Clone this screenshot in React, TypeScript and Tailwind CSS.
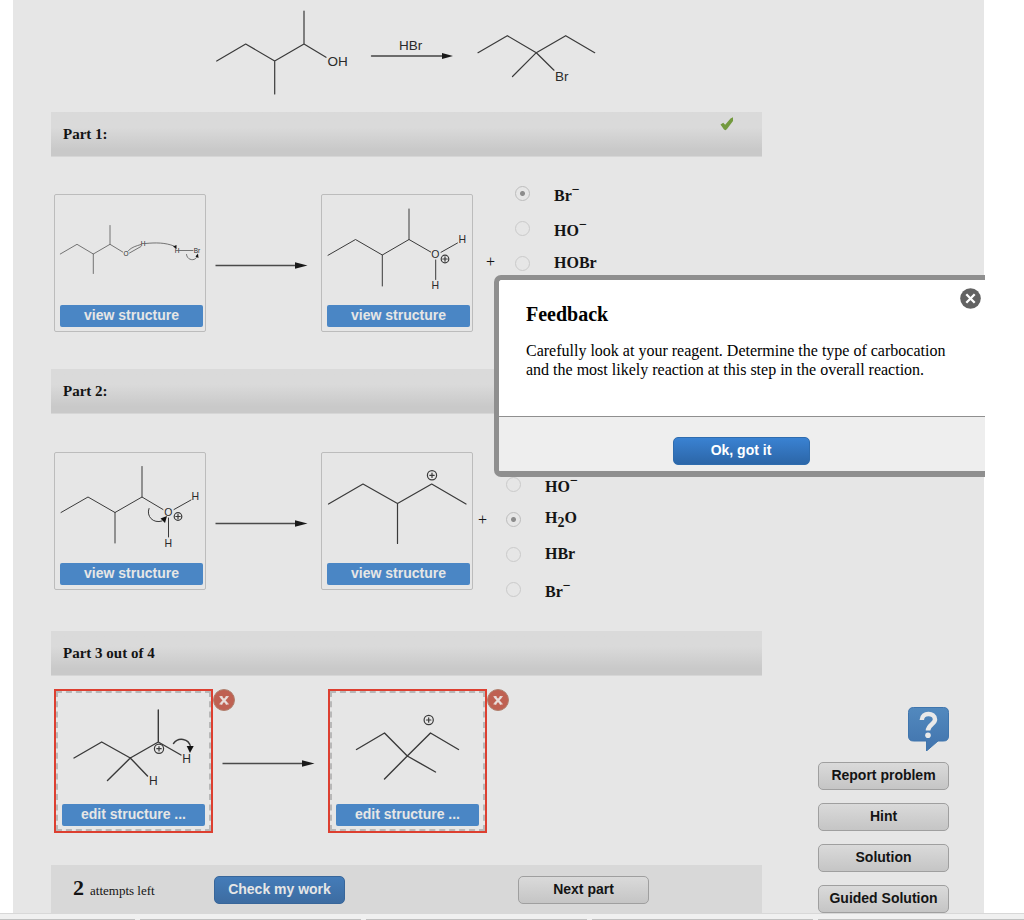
import type { ReactNode } from 'react';

const grayButton =
  'flex h-7 w-full items-center justify-center rounded-[5px] border border-[#9f9f9f] bg-linear-to-b from-[#dadada] to-[#c5c5c5] pb-[2px] font-["Liberation_Sans",Arial,sans-serif] text-sm font-bold text-[#141414]';

function Arrow() {
  return (
    <svg width="115" height="20" viewBox="0 0 115 20" className="shrink-0" aria-hidden="true">
      <path d="M9.5 12.5H92" stroke="#4a4a4a" strokeWidth="1.5" />
      <path d="M89 9.2L101.5 12.5L89 15.8Z" fill="#1a1a1a" />
    </svg>
  );
}

function Drawing({ viewBox, height, children, wide = false }: { viewBox: string; height: number; children: ReactNode; wide?: boolean }) {
  return (
    <svg
      viewBox={viewBox}
      width={wide ? 711 : 150}
      height={height}
      fill="none"
      stroke="#3a3a3a"
      strokeLinejoin="round"
      strokeLinecap="round"
      className='block font-["Liberation_Sans",Arial,sans-serif]'
      aria-hidden="true"
    >
      {children}
    </svg>
  );
}

function Atom({ x, y, size = 11, middle = true, children }: { x: number; y: number; size?: number; middle?: boolean; children: string }) {
  return (
    <text x={x} y={y} fontSize={size} fill="#2a2a2a" stroke="none" textAnchor={middle ? 'middle' : 'start'}>
      {children}
    </text>
  );
}

function Charge({ x, y, r = 4 }: { x: number; y: number; r?: number }) {
  return (
    <g strokeWidth="1.2">
      <circle cx={x} cy={y} r={r} />
      <path d={`M${x - 2.2} ${y}h4.4M${x} ${y - 2.2}v4.4`} />
    </g>
  );
}

function ViewCard({ children }: { children: ReactNode }) {
  return (
    <div className="w-[152px] shrink-0 rounded-[2px] border border-[#bcbcbc] pb-1">
      {children}
      <button className='ml-[5px] flex h-[22px] w-[143px] items-center justify-center rounded-[2px] bg-[#4a86c5] pb-[2px] font-["Liberation_Sans",Arial,sans-serif] text-sm font-bold text-[#e6e6e6]'>
        view structure
      </button>
    </div>
  );
}

function EditCard({ children }: { children: ReactNode }) {
  return (
    <div className="relative w-[159px] shrink-0 border-2 border-[#dd3f30]">
      <div className="border-2 border-dashed border-[#b8b8b8] pb-[3px]">
        {children}
        <button className='ml-1 flex h-[22px] w-[143px] items-center justify-center rounded-[2px] bg-[#4a86c5] pb-[2px] font-["Liberation_Sans",Arial,sans-serif] text-sm font-bold text-[#e6e6e6]'>
          edit structure ...
        </button>
      </div>
      <svg width="22" height="22" viewBox="0 0 22 22" className="absolute -top-0.5 left-full ml-0.5" role="img" aria-label="Incorrect">
        <circle cx="11" cy="11" r="10.5" fill="#bf6152" stroke="#b0816f" />
        <path d="M7.7 7.8L14.3 15M14.3 7.8L7.7 15" stroke="#e8dedb" strokeWidth="2.3" />
        <path d="M6.5 7.6h3M12.7 7.6h3M6.5 15h3M12.7 15h3" stroke="#e8dedb" strokeWidth="1" />
      </svg>
    </div>
  );
}

function PartBar({ title, done = false }: { title: string; done?: boolean }) {
  return (
    <div className="flex h-[45px] items-start justify-between border-b border-[#d6d6d6] bg-linear-to-b from-[#dadada] from-35% to-[#c9c9c9] to-85% pl-3">
      <h2 className="pt-[13px] text-[15px] leading-[18px] font-bold text-[#141414]">{title}</h2>
      {done && (
        <svg width="14" height="14" viewBox="0 0 14 14" className="mt-[5px] mr-7" role="img" aria-label="Correct">
          <path d="M0.5 7.5L3.2 5.800L5.2 7.800L10.500 1.500L13 0.300V4L7 12L5.500 13.200L4 12.500Z" fill="#739a3e" />
        </svg>
      )}
    </div>
  );
}

function Choice({ group, label, checked = false, children }: { group: string; label: string; checked?: boolean; children: ReactNode }) {
  return (
    <label className="flex h-[35px] items-center gap-6 text-base leading-[18px] font-bold text-[#141414]">
      <input
        type="radio"
        name={group}
        aria-label={label}
        defaultChecked={checked}
        className="size-[15px] shrink-0 appearance-none rounded-full border border-[#cacaca] checked:border-[#bdbdbd] checked:bg-[radial-gradient(circle,#8c8c8c_2px,transparent_3px)]"
      />
      <span className="pb-px">{children}</span>
    </label>
  );
}

const Minus = () => <sup className="top-0 align-[7px] text-sm leading-[18px]">−</sup>;

export default function App() {
  return (
    <div className='min-h-[920px] bg-white font-["Liberation_Serif","Times_New_Roman",serif]'>
      <div className="relative mr-10 ml-[13px] flex justify-between bg-[#e6e6e6] pr-[35px] pl-[38px]">
        <main className="max-w-[711px] flex-1">
          <Drawing viewBox="51 0 711 112" height={112} wide>
            <path strokeWidth="1.2" d="M216.7 61L245.7 44L274.7 61L304 44L326 57.3M304 44V11M274.7 61V94M478 52.7L507.3 35.7L536.3 52.7L565.7 35.7L594.7 52.7M536.3 52.7L512.5 76.5M536.3 52.7L554 70.2" />
            <path strokeWidth="1.4" stroke="#444" d="M371.5 56H444" />
            <path d="M442 53L453 56L442 59Z" fill="#1a1a1a" stroke="none" />
            <Atom x={327.5} y={66} size={13.5} middle={false}>OH</Atom>
            <Atom x={399} y={50} size={13.5} middle={false}>HBr</Atom>
            <Atom x={555} y={81} size={13.5} middle={false}>Br</Atom>
          </Drawing>

          <section>
            <PartBar title="Part 1:" done />
            <div className="flex items-start pb-[37px] pl-[3px]">
              <div className="flex items-center pt-[37px]">
                <ViewCard>
                  <Drawing viewBox="55 195 150 110" height={110}>
                    <path strokeWidth="0.8" stroke="#555" d="M60.3 254L77 244.3L93.3 254L110 244.3L122.7 252M110 244V225.5M93.3 254V273.5M128.5 250.5C132 247 136 246 141 244.5M129.5 253L141 246.5M145.5 243.5C156 242.5 165 242.5 174 246M179.5 250.5H193M186.5 254.5C187 261 196.5 261.500 197 256" />
                    <path d="M173 246.500L176.500 245L176.500 249ZM195.5 256.500L198 253.500L198.500 258Z" fill="#111" stroke="none" />
                    <Atom x={126} y={256} size={6.5}>O</Atom>
                    <Atom x={143} y={246} size={6.5}>H</Atom>
                    <Atom x={177} y={253} size={6.5}>H</Atom>
                    <Atom x={197} y={252.5} size={6.5}>Br</Atom>
                  </Drawing>
                </ViewCard>
                <Arrow />
                <ViewCard>
                  <Drawing viewBox="322 195 150 110" height={110}>
                    <path d="M328 255.3L355.5 239.500L382.300 255L409 239.500L430.700 252M409 239.500V209M382.300 255V286M441 252.300L457.500 243M435.700 260V279.500" />
                    <Atom x={435.3} y={258} size={10.5}>O</Atom>
                    <Atom x={462.3} y={242.5} size={10.5}>H</Atom>
                    <Atom x={435.3} y={289} size={10.5}>H</Atom>
                    <Charge x={445} y={259} r={3.8} />
                  </Drawing>
                </ViewCard>
              </div>
              <span className="mt-[95px] ml-3 w-[11px] text-center text-base leading-[20px] text-[#141414]">+</span>
              <fieldset className="mt-[19px] ml-[19px]">
                <Choice group="step1" label="Bromide" checked>Br<Minus /></Choice>
                <Choice group="step1" label="Hydroxide">HO<Minus /></Choice>
                <Choice group="step1" label="Hypobromous acid">HOBr</Choice>
              </fieldset>
            </div>
          </section>

          <section>
            <PartBar title="Part 2:" />
            <div className="flex items-start pb-6 pl-[3px]">
              <div className="flex items-center pt-[38px]">
                <ViewCard>
                  <Drawing viewBox="55 453 150 110" height={110}>
                    <path d="M61 512.500L88 497L115 512.500L142 497L163 509.500M142 497V466.500M115 512.500V543M174 509.500L191 500M168.500 518V537M149 508.500C146 516 153 524 162 521" />
                    <path d="M160.500 518.500L167 516L165 523Z" fill="#111" stroke="none" />
                    <Atom x={168.3} y={515.5} size={10.5}>O</Atom>
                    <Atom x={195.3} y={500} size={10.5}>H</Atom>
                    <Atom x={168.3} y={546.5} size={10.5}>H</Atom>
                    <Charge x={178} y={516.5} r={3.8} />
                  </Drawing>
                </ViewCard>
                <Arrow />
                <ViewCard>
                  <Drawing viewBox="322 453 150 110" height={110}>
                    <path strokeWidth="1.2" d="M328.500 504L363 484L397.500 503.500L431.700 484L466 504M397.500 503.500V543.500" />
                    <Charge x={432} y={475.3} r={4.6} />
                  </Drawing>
                </ViewCard>
              </div>
              <span className="mt-[96px] ml-1 w-[11px] text-center text-base leading-[20px] text-[#141414]">+</span>
              <fieldset className="mt-[53px] ml-[18px]">
                <Choice group="step2" label="Hydroxide">HO<Minus /></Choice>
                <Choice group="step2" label="Water" checked>
                  H<sub className="text-sm">2</sub>O
                </Choice>
                <Choice group="step2" label="Hydrogen bromide">HBr</Choice>
                <Choice group="step2" label="Bromide">Br<Minus /></Choice>
              </fieldset>
            </div>
          </section>

          <section>
            <PartBar title="Part 3 out of 4" />
            <div className="flex items-center pt-[13px] pb-8 pl-[3px]">
              <EditCard>
                <Drawing viewBox="58 693 150 111" height={111}>
                  <path strokeWidth="1.4" d="M74 758L101.700 742L130.300 758L158.300 742L181 755M158.300 742V710M130.300 758L107.500 780.500M130.300 758L147.500 776M173.500 743.500C178 737 189 738 190.500 747" />
                  <path d="M186.700 746L193.700 746L190 753Z" fill="#111" stroke="none" />
                  <Atom x={153.3} y={785} size={12}>H</Atom>
                  <Atom x={186.5} y={762.5} size={12}>H</Atom>
                  <Charge x={159} y={748.7} r={4.6} />
                </Drawing>
              </EditCard>
              <Arrow />
              <EditCard>
                <Drawing viewBox="332 693 150 111" height={111}>
                  <path strokeWidth="1.4" d="M356.500 749.500L384.500 733L407.300 756L430.500 733L458.500 749.500M407.300 756L384.500 779M407.300 756L435.500 772" />
                  <Charge x={428.7} y={720} r={4.6} />
                </Drawing>
              </EditCard>
            </div>
          </section>

          <footer className="flex h-12 items-center bg-[#d8d8d8] pt-px pl-[22px]">
            <p className="w-[141px] pb-1 text-[13px] text-[#141414]">
              <strong className="mr-1.5 text-[22px]">2</strong>attempts left
            </p>
            <button className='flex h-7 w-[131px] items-center justify-center rounded-[5px] border border-[#38669a] bg-linear-to-b from-[#447cb9] to-[#3d6ca1] pb-[2px] font-["Liberation_Sans",Arial,sans-serif] text-sm font-bold text-[#e6e6e6]'>
              Check my work
            </button>
            <div className="ml-[173px] w-[131px]">
              <button className={grayButton}>Next part</button>
            </div>
          </footer>
        </main>

        <aside className="flex w-[131px] flex-col gap-[13px] self-end">
          <button aria-label="Help" className="-mb-0.5 self-end">
            <svg width="41" height="44" viewBox="0 0 41 44" className="block">
              <defs>
                <linearGradient id="bubble" x1="0" y1="0" x2="0" y2="1">
                  <stop offset="0" stopColor="#5289be" />
                  <stop offset="1" stopColor="#4173ad" />
                </linearGradient>
              </defs>
              <path d="M5.500 .5H35.500Q40.500 .5 40.500 5.500V29Q40.500 34 35.500 34H30L18.500 44V34H5.500Q.5 34 .5 29V5.500Q.5 .5 5.500 .5Z" fill="url(#bubble)" stroke="#3f75ad" />
              <path d="M13.800 13C13.800 5 27 5 27 12.500C27 17 20 17.500 20 23.500" fill="none" stroke="#e9e9e9" strokeWidth="4.500" />
              <circle cx="20" cy="28.300" r="2.800" fill="#e9e9e9" />
            </svg>
          </button>
          <button className={grayButton}>Report problem</button>
          <button className={grayButton}>Hint</button>
          <button className={grayButton}>Solution</button>
          <button className={grayButton}>Guided Solution</button>
        </aside>

        <div
          role="dialog"
          aria-labelledby="feedback-title"
          className="absolute top-[275px] -right-px w-[491px] rounded-l-[7px] border-5 border-r-0 border-b-6 border-[#8f8f8f] bg-white text-black"
        >
          <div className="relative h-[136px] pt-[22px] pr-8 pl-[27px]">
            <h2 id="feedback-title" className="text-xl leading-6 font-bold">Feedback</h2>
            <p className="mt-[15px] text-base leading-[19px]">
              Carefully look at your reagent. Determine the type of carbocation and the most likely reaction at this step in the overall reaction.
            </p>
            <button aria-label="Close" className="absolute top-2 right-1">
              <svg width="21" height="21" viewBox="0 0 21 21" className="block">
                <circle cx="10.5" cy="10.5" r="10.3" fill="#626262" />
                <path d="M6.300 6.300L14.700 14.700M14.700 6.300L6.300 14.700" stroke="#fff" strokeWidth="2.300" />
              </svg>
            </button>
          </div>
          <div className="flex h-[55px] items-center justify-center rounded-bl-[2px] border-t border-[#8f8f8f] bg-[#eeeeee] pt-3.5 pr-[2px]">
            <button className='flex h-7 w-[137px] items-center justify-center rounded-[5px] border border-[#2f6cae] bg-linear-to-b from-[#3a82d2] to-[#2c66a8] pb-[2px] font-["Liberation_Sans",Arial,sans-serif] text-sm font-bold text-white'>
              Ok, got it
            </button>
          </div>
        </div>
      </div>

      <div className="flex h-[7px] items-end gap-[5px] overflow-hidden border-t border-[#d8d8d8] bg-[#f0f0f0]">
        <div className="h-px w-[135px] shrink-0 bg-[#c0c0c0]" />
        <div className="h-px w-[221px] shrink-0 bg-[#c0c0c0]" />
        <div className="h-px w-[221px] shrink-0 bg-[#c0c0c0]" />
        <div className="h-px w-[221px] shrink-0 bg-[#c0c0c0]" />
        <div className="h-px flex-1 bg-[#c0c0c0]" />
      </div>
    </div>
  );
}
